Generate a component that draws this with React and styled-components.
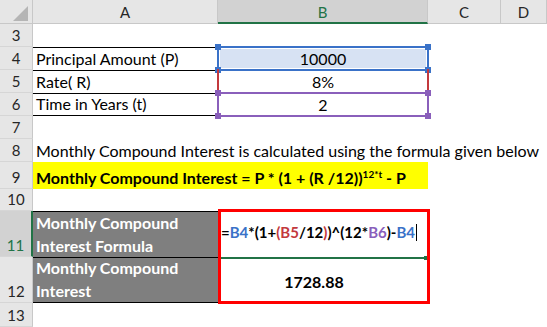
import React from 'react'
import styled, { createGlobalStyle } from 'styled-components'

const GlobalStyle = createGlobalStyle`
  * {
    margin: 0;
    padding: 0;
    box-sizing: border-box;
  }
  body {
    background: #fff;
    font-family: Lato, "Open Sans", sans-serif;
    overflow: hidden;
  }
`

const excelGreen = '#217346'
const tones = {
  blue: '#3a72c8',
  red: '#c3393d',
  purple: '#8a5fbb',
}

const Sheet = styled.div`
  display: grid;
  grid-template-columns: 33px 185px 210px 73px 46px;
  grid-template-rows: 24px 23px 23px 23px 23px 23px 23px 27px 22px 46px 46px 24px;
  width: 547px;
  height: 327px;
  overflow: hidden;
  font-size: 16px;
  color: #000;
`

const Corner = styled.div`
  position: relative;
  background: #e6e6e6;
  border-right: 1px solid #c8c8c8;
  border-bottom: 1px solid #c8c8c8;

  &::after {
    content: '';
    position: absolute;
    right: 4px;
    bottom: 2px;
    border-style: solid;
    border-width: 0 0 15px 15px;
    border-color: transparent transparent #b5b5b5 transparent;
  }
`

const ColHead = styled.div`
  display: flex;
  align-items: center;
  justify-content: center;
  font-size: 15px;
  background: ${p => (p.$active ? '#d2d2d2' : '#e6e6e6')};
  color: ${p => (p.$active ? excelGreen : '#262626')};
  border-right: 1px solid #c8c8c8;
  border-bottom: ${p => (p.$active ? `2px solid ${excelGreen}` : '1px solid #c8c8c8')};
  padding-top: 1px;
`

const RowHead = styled.div`
  display: flex;
  align-items: flex-end;
  justify-content: center;
  font-size: 15px;
  line-height: 22px;
  background: ${p => (p.$active ? '#d2d2d2' : '#e6e6e6')};
  color: ${p => (p.$active ? excelGreen : '#262626')};
  border-right: ${p => (p.$active ? `2px solid ${excelGreen}` : '1px solid #c8c8c8')};
  border-bottom: 1px solid #d6d6d6;
`

const Cell = styled.div`
  position: relative;
  display: flex;
  align-items: ${p => (p.$middle ? 'center' : 'flex-end')};
  justify-content: ${p => (p.$center ? 'center' : 'flex-start')};
  grid-column: ${p => (p.$span ? `span ${p.$span}` : 'auto')};
  padding: 0 3px;
  line-height: 22px;
  white-space: nowrap;
  background: ${p => p.$fill || 'transparent'};
  border-top: ${p => (p.$top ? '1px solid #000' : 'none')};
  border-bottom: ${p => (p.$bottom ? '1px solid #000' : 'none')};
  font-weight: ${p => (p.$bold ? 700 : 400)};
`

const LabelCell = styled(Cell)`
  background: #7f7f7f;
  color: #fff;
  font-weight: 700;
  white-space: normal;
  line-height: 23px;
`

const RangeFrame = styled.span`
  position: absolute;
  inset: -1px;
  border: 2px solid ${p => p.$tone};
  ${p => p.$sidesOnly && 'border-top: none; border-bottom: none;'}
  box-shadow: ${p => (p.$sidesOnly ? 'none' : 'inset 0 0 0 1px #fff')};
  z-index: 1;
  pointer-events: none;
`

const Grip = styled.i`
  position: absolute;
  width: 6px;
  height: 6px;
  background: ${p => p.$tone};
  ${p => p.$v}: -4px;
  ${p => p.$h}: -4px;
  z-index: 3;
`

const Sup = styled.sup`
  font-size: 10px;
  line-height: 0;
  vertical-align: 6px;
`

const OutputBlock = styled.div`
  position: relative;
  grid-row: span 2;
  display: flex;
  flex-direction: column;

  &::after {
    content: '';
    position: absolute;
    top: -2px;
    left: 0;
    right: -2px;
    bottom: -1px;
    border: 3px solid #ff0000;
    z-index: 2;
    pointer-events: none;
  }
`

const FormulaLine = styled.div`
  position: relative;
  height: 48px;
  display: flex;
  align-items: center;
  padding: 0 0 4px 3px;
  border-bottom: 2px solid ${excelGreen};
  font-size: 15px;
  font-weight: 700;
  white-space: nowrap;

  &::after {
    content: '';
    position: absolute;
    right: 0;
    bottom: -3px;
    width: 4px;
    height: 4px;
    background: ${excelGreen};
  }
`

const Ref = styled.span`
  color: ${p => p.$tone || '#000'};
`

const Caret = styled.span`
  display: inline-block;
  width: 1px;
  height: 17px;
  margin-left: 1px;
  background: #000;
  vertical-align: middle;
`

const ResultLine = styled.div`
  flex: 1;
  display: flex;
  align-items: center;
  justify-content: center;
  padding-right: 18px;
  font-weight: 700;
`

function Range({ tone, grips, sidesOnly }) {
  return (
    <RangeFrame $tone={tone} $sidesOnly={sidesOnly}>
      {grips.map(([v, h]) => (
        <Grip key={v + h} $tone={tone} $v={v} $h={h} />
      ))}
    </RangeFrame>
  )
}

const allCorners = [
  ['top', 'left'],
  ['top', 'right'],
  ['bottom', 'left'],
  ['bottom', 'right'],
]

export default function App() {
  return (
    <>
      <GlobalStyle />
      <Sheet>
        <Corner />
        <ColHead>A</ColHead>
        <ColHead $active>B</ColHead>
        <ColHead>C</ColHead>
        <ColHead>D</ColHead>

        <RowHead>3</RowHead>
        <Cell />
        <Cell />
        <Cell />
        <Cell />

        <RowHead>4</RowHead>
        <Cell $top>Principal Amount (P)</Cell>
        <Cell $center $fill="#d7e2f3">
          10000
          <Range tone={tones.blue} grips={allCorners} />
        </Cell>
        <Cell />
        <Cell />

        <RowHead>5</RowHead>
        <Cell $top>Rate( R)</Cell>
        <Cell $center>
          8%
          <Range tone={tones.red} grips={[]} sidesOnly />
        </Cell>
        <Cell />
        <Cell />

        <RowHead>6</RowHead>
        <Cell $top $bottom>Time in Years (t)</Cell>
        <Cell $center>
          2
          <Range tone={tones.purple} grips={allCorners} />
        </Cell>
        <Cell />
        <Cell />

        <RowHead>7</RowHead>
        <Cell />
        <Cell />
        <Cell />
        <Cell />

        <RowHead>8</RowHead>
        <Cell $span={4}>Monthly Compound Interest is calculated using the formula given below</Cell>

        <RowHead>9</RowHead>
        <Cell $span={2} $bold $fill="#ffff00">
          <span>
            Monthly Compound Interest = P * (1 + (R /12))<Sup>12*t</Sup> - P
          </span>
        </Cell>
        <Cell />
        <Cell />

        <RowHead>10</RowHead>
        <Cell />
        <Cell />
        <Cell />
        <Cell />

        <RowHead $active>11</RowHead>
        <LabelCell $top>Monthly Compound Interest Formula</LabelCell>
        <OutputBlock>
          <FormulaLine>
            =<Ref $tone={tones.blue}>B4</Ref>*(1+<Ref $tone={tones.red}>(B5</Ref>/12
            <Ref $tone={tones.red}>)</Ref>)^(12*<Ref $tone={tones.purple}>B6</Ref>)-
            <Ref $tone={tones.blue}>B4</Ref>
            <Caret />
          </FormulaLine>
          <ResultLine>1728.88</ResultLine>
        </OutputBlock>
        <Cell />
        <Cell />

        <RowHead>12</RowHead>
        <LabelCell $top $bottom>Monthly Compound Interest</LabelCell>
        <Cell />
        <Cell />

        <RowHead>13</RowHead>
        <Cell />
        <Cell />
        <Cell />
        <Cell />
      </Sheet>
    </>
  )
}
